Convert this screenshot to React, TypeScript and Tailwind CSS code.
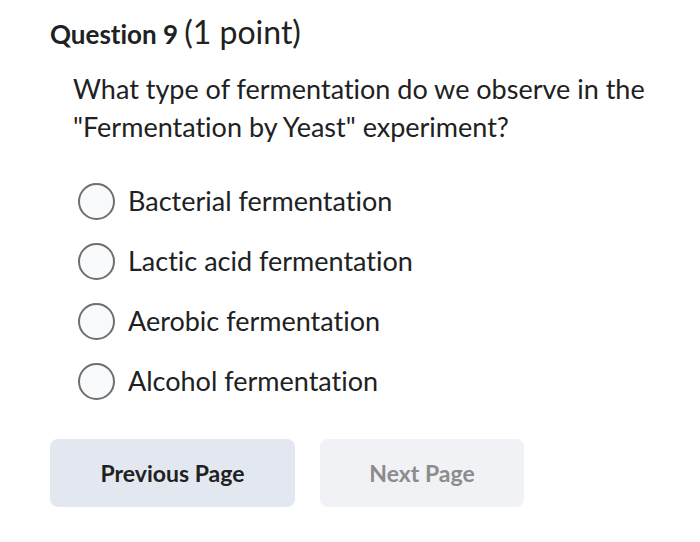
const options = [
  "Bacterial fermentation",
  "Lactic acid fermentation",
  "Aerobic fermentation",
  "Alcohol fermentation",
];

export default function App() {
  return (
    <div
      className="w-[700px] h-[542px] bg-white text-[#202122] overflow-hidden [font-variant-ligatures:no-common-ligatures]"
      style={{ fontFamily: "Lato, 'Open Sans', sans-serif" }}
    >
      <div className="pl-[50px] pt-[14px]">
        <h2 className="leading-[36px]">
          <span className="text-[26px] font-bold">Question 9</span>{" "}
          <span className="ml-[2px] text-[32px]">(1 point)</span>
        </h2>

        <p className="mt-[14px] ml-[23px] w-[620px] text-[27px] leading-[38px]">
          What type of fermentation do we observe in the "Fermentation by Yeast" experiment?
        </p>

        <ul className="mt-[37px] ml-[28px] flex flex-col gap-[23px]">
          {options.map((o) => (
            <li key={o} className="flex items-center gap-[13px] h-[37px]">
              <span className="w-[37px] h-[37px] rounded-full border-2 border-[#6f6f6f] bg-[#f9fafc] shrink-0" />
              <span className="text-[27px]">{o}</span>
            </li>
          ))}
        </ul>

        <div className="mt-[39px] flex gap-[25px]">
          <button className="w-[245px] h-[68px] rounded-[8px] bg-[#e3e8f0] text-[23px] font-bold text-[#202122]">
            Previous Page
          </button>
          <button className="w-[204px] h-[68px] rounded-[8px] bg-[#f1f2f5] text-[23px] font-bold text-[#8c8c8c]">
            Next Page
          </button>
        </div>
      </div>
    </div>
  );
}
